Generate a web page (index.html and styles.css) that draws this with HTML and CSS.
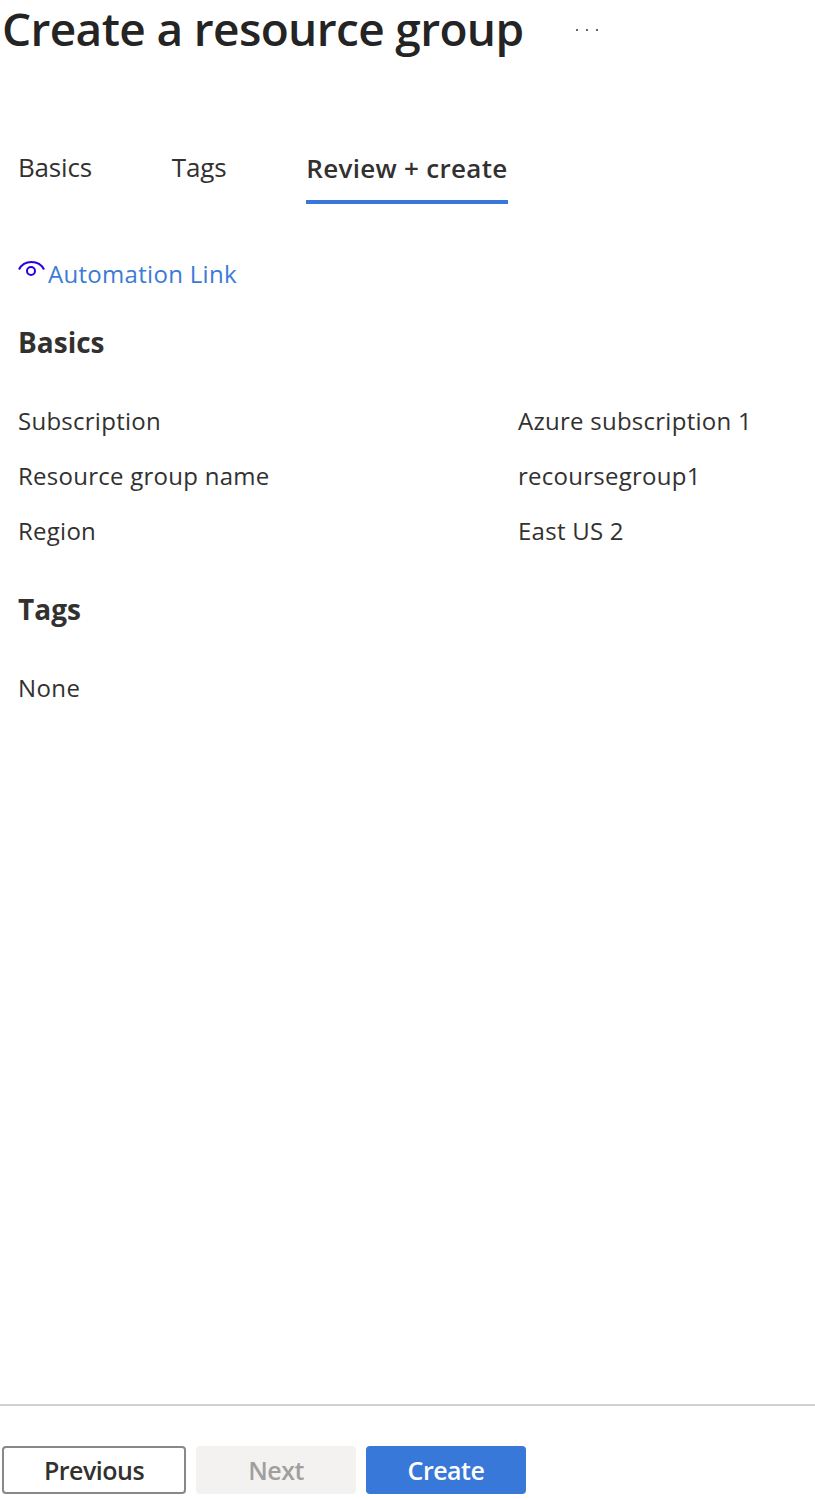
FILE: index.html
```html
<!DOCTYPE html>
<html lang="en">
<head>
<meta charset="utf-8">
<title>Create a resource group</title>
<link rel="stylesheet" href="styles.css">
</head>
<body>
<div class="page">
  <header class="header">
    <h1 class="title">Create a resource group</h1>
    <span class="more" aria-label="More">
      <svg width="24" height="4" viewBox="0 0 24 4"><circle cx="2" cy="2" r="1.100" /><circle cx="12" cy="2" r="1.100" /><circle cx="22" cy="2" r="1.100" /></svg>
    </span>
  </header>
  <nav class="tabs">
    <a class="tab">Basics</a>
    <a class="tab">Tags</a>
    <a class="tab tab-active">Review + create</a>
  </nav>
  <main class="content">
    <a class="automation">
      <svg class="eye" width="28" height="20" viewBox="0 0 28 20" fill="none"><path d="M1 9.500C3.500 4.500 8 2 13.500 2S23.500 4.500 26 9.500" /><circle cx="13" cy="11" r="4" /></svg>
      <span>Automation Link</span>
    </a>
    <h2 class="section-title">Basics</h2>
    <dl class="summary">
      <div class="row"><dt>Subscription</dt><dd>Azure subscription 1</dd></div>
      <div class="row"><dt>Resource group name</dt><dd>recoursegroup1</dd></div>
      <div class="row"><dt>Region</dt><dd>East US 2</dd></div>
    </dl>
    <h2 class="section-title tags-title">Tags</h2>
    <p class="none">None</p>
  </main>
  <footer class="footer">
    <button class="btn btn-outline">Previous</button>
    <button class="btn btn-disabled">Next</button>
    <button class="btn btn-primary">Create</button>
  </footer>
</div>
</body>
</html>
```
FILE: styles.css
```css
* { box-sizing: border-box; }
html, body { margin: 0; padding: 0; background: #fff; }
body { font-family: "Open Sans", "Noto Sans", sans-serif; color: #323130; }
.page { width: 815px; height: 1500px; display: flex; flex-direction: column; }
.header { display: flex; align-items: flex-start; height: 60px; padding-left: 2px; }
.title { margin: 0; font-size: 46px; font-weight: 600; line-height: 56px; color: #242424; letter-spacing: -0.63px; }
.more { display: flex; margin-left: 52px; margin-top: 28px; }
.more svg { fill: #444; }
.tabs { display: flex; margin-top: 84px; padding-left: 18px; gap: 80px; height: 60px; }
.tab { font-size: 26px; line-height: 47px; height: 60px; letter-spacing: -0.2px; }
.tab-active { font-weight: 600; letter-spacing: 0.3px; line-height: 49px; border-bottom: 4px solid #3878d8; }
.content { flex: 1; padding: 49px 18px 0; display: flex; flex-direction: column; }
.automation { display: flex; align-items: center; height: 40px; color: #3a7bd5; font-size: 24px; letter-spacing: 0.3px; }
.eye { stroke: #2a00e0; stroke-width: 2; margin-right: 2px; margin-top: -6px; }
.section-title { margin: 29px 0 0; font-size: 28px; font-weight: 700; line-height: 40px; }
.summary { margin: 31px 0 0; }
.row { display: flex; height: 55px; align-items: center; font-size: 24px; letter-spacing: 0.26px; }
dt { width: 500px; }
dd { margin: 0; }
.tags-title { margin-top: 31px; }
.none { margin: 39px 0 0; font-size: 24px; line-height: 40px; letter-spacing: 0.4px; }
.footer { border-top: 2px solid #d2d0ce; height: 96px; padding: 40px 2px 0; display: flex; gap: 10px; flex: none; }
.btn { height: 48px; font: 600 25px "Open Sans", sans-serif; letter-spacing: -0.5px; border-radius: 4px; border: none; padding: 0; }
.btn-outline { width: 184px; background: #fff; border: 2px solid #8a8886; color: #323130; }
.btn-disabled { width: 160px; background: #f3f2f1; color: #a19f9d; }
.btn-primary { width: 160px; background: #3878d8; color: #fff; }
```
